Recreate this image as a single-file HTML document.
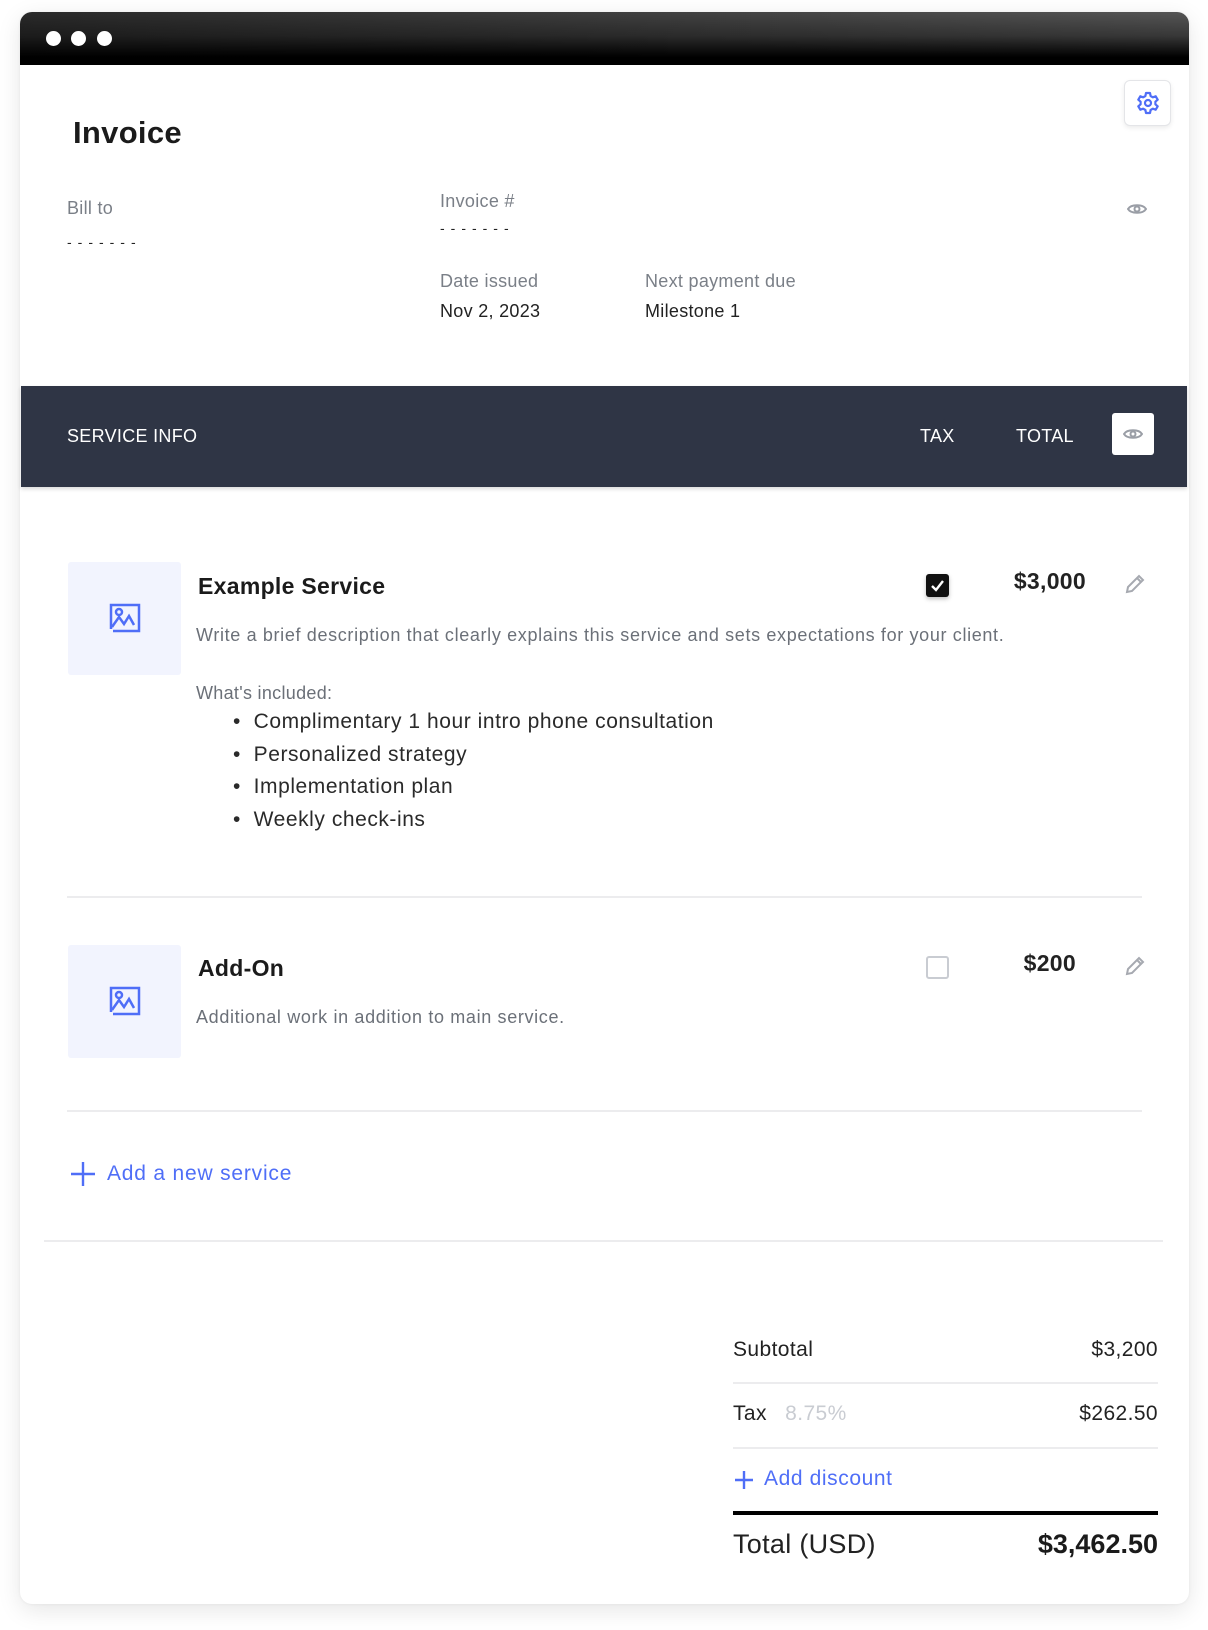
<!DOCTYPE html>
<html><head><meta charset="utf-8"><style>
*{margin:0;padding:0;box-sizing:border-box}
body{width:1208px;height:1630px;background:#fff;font-family:"Liberation Sans",Arial,sans-serif;position:relative;overflow:hidden;color:#1e1e1e}
.a{position:absolute;white-space:nowrap}
.card{position:absolute;left:20px;top:12px;width:1169px;height:1592px;background:#fff;border-radius:12px;box-shadow:0 6px 24px rgba(0,0,0,.10),0 0 3px rgba(0,0,0,.06);overflow:hidden}
.bar{position:absolute;left:0;top:0;width:100%;height:53px;background:linear-gradient(180deg,rgba(0,0,0,0) 0%,rgba(0,0,0,.35) 45%,#000 85%),linear-gradient(90deg,#2a2a2a 0%,#3a3a3a 40%,#555 100%);}
.dot{position:absolute;top:19px;width:15px;height:15px;border-radius:50%;background:#fff}
.lbl{font-size:18px;color:#7a7f87;letter-spacing:.3px}
.val{font-size:18px;color:#222;letter-spacing:.3px}
.gray{color:#6b7078;letter-spacing:.65px}
.line{position:absolute;height:2px;background:#ececee}
.img{position:absolute;width:113px;height:113px;background:#f2f4fe;border-radius:3px}
.img svg{position:absolute;left:41px;top:41px}
.dash{font-size:14px;letter-spacing:6px;color:#222}
</style></head><body>
<div class="card">
 <div class="bar"></div>
 <div class="dot" style="left:26px"></div><div class="dot" style="left:51px"></div><div class="dot" style="left:77px"></div>
</div>
<div class="a" style="left:1124px;top:80px;width:47px;height:46px;border:1px solid #e4e5e8;border-radius:6px;background:#fff;box-shadow:0 2px 5px rgba(0,0,0,.08)">
 <svg width="24" height="24" viewBox="0 0 24 24" style="position:absolute;left:11px;top:10px" fill="none" stroke="#4f6ef7" stroke-width="2.2" stroke-linejoin="round"><path d="M10 2h4l.6 3 2.2 1.3 2.9-1 2 3.4-2.3 2v2.6l2.3 2-2 3.4-2.9-1L14.6 19 14 22h-4l-.6-3-2.2-1.3-2.9 1-2-3.4 2.3-2v-2.6l-2.3-2 2-3.4 2.9 1L9.4 5z"/><circle cx="12" cy="12" r="3"/></svg>
</div>
<div class="a" style="left:73px;top:115px;font-size:31px;font-weight:bold;line-height:36px;color:#1b1b1b;letter-spacing:.3px">Invoice</div>
<div class="a lbl" style="left:67px;top:198px">Bill to</div>
<div class="a dash" style="left:67px;top:234px">-------</div>
<div class="a lbl" style="left:440px;top:191px">Invoice #</div>
<div class="a dash" style="left:440px;top:220px">-------</div>
<svg class="a" style="left:1127px;top:202px" width="20" height="14" viewBox="0 0 20 14" fill="none" stroke="#9a9ea6" stroke-width="2"><path d="M1 7C4 2 16 2 19 7 16 12 4 12 1 7z"/><circle cx="10" cy="7" r="2.5"/></svg>
<div class="a lbl" style="left:440px;top:271px">Date issued</div>
<div class="a val" style="left:440px;top:301px">Nov 2, 2023</div>
<div class="a lbl" style="left:645px;top:271px">Next payment due</div>
<div class="a val" style="left:645px;top:301px">Milestone 1</div>
<div class="a" style="left:21px;top:386px;width:1166px;height:101px;background:#2f3545;box-shadow:0 2px 4px rgba(0,0,0,.15)"></div>
<div class="a" style="left:67px;top:426px;font-size:18px;color:#fff;letter-spacing:.3px">SERVICE INFO</div>
<div class="a" style="left:920px;top:426px;font-size:18px;color:#fff;letter-spacing:.3px">TAX</div>
<div class="a" style="left:1016px;top:426px;font-size:18px;color:#fff;letter-spacing:.3px">TOTAL</div>
<div class="a" style="left:1112px;top:413px;width:42px;height:42px;background:#fff;border-radius:3px">
 <svg width="20" height="14" viewBox="0 0 20 14" style="position:absolute;left:11px;top:14px" fill="none" stroke="#9a9ea6" stroke-width="2"><path d="M1 7C4 2 16 2 19 7 16 12 4 12 1 7z"/><circle cx="10" cy="7" r="2.5"/></svg>
</div>
<div class="img" style="left:68px;top:562px"><svg width="32" height="30" viewBox="0 0 32 30" fill="none" stroke="#4f6ef7" stroke-width="2.5"><path d="M2 26V2h28v26H4"/><circle cx="10" cy="9" r="3"/><path d="M3 24l7-10 5 7 5-8 5 9"/></svg></div>
<div class="a" style="left:198px;top:573px;font-size:23px;font-weight:bold;color:#1b1b1b;letter-spacing:.3px">Example Service</div>
<div class="a" style="left:926px;top:574px;width:23px;height:23px;background:#111;border-radius:3px;box-shadow:0 2px 4px rgba(0,0,0,.25)"><svg width="23" height="23" viewBox="0 0 23 23" fill="none" stroke="#fff" stroke-width="2.4"><path d="M6 12l4 4 7-9"/></svg></div>
<div class="a" style="left:940px;top:568px;width:146px;text-align:right;font-size:23px;font-weight:bold;color:#222;letter-spacing:.3px">$3,000</div>
<svg class="a" style="left:1124px;top:573px" width="22" height="22" viewBox="0 0 22 22" fill="none" stroke="#a6a9b0" stroke-width="2"><path d="M3 19l1-5L15 3l4 4L8 18z M13 5l4 4"/></svg>
<div class="a gray" style="left:196px;top:625px;font-size:18px">Write a brief description that clearly explains this service and sets expectations for your client.</div>
<div class="a gray" style="left:196px;top:683px;font-size:18px;letter-spacing:.3px">What's included:</div>
<div class="a" style="left:233px;top:706px;font-size:21px;line-height:32.6px;color:#2a2a2a;letter-spacing:.55px">
•&nbsp;&nbsp;Complimentary 1 hour intro phone consultation<br>•&nbsp;&nbsp;Personalized strategy<br>•&nbsp;&nbsp;Implementation plan<br>•&nbsp;&nbsp;Weekly check-ins</div>
<div class="line" style="left:67px;top:896px;width:1075px"></div>
<div class="img" style="left:68px;top:945px"><svg width="32" height="30" viewBox="0 0 32 30" fill="none" stroke="#4f6ef7" stroke-width="2.5"><path d="M2 26V2h28v26H4"/><circle cx="10" cy="9" r="3"/><path d="M3 24l7-10 5 7 5-8 5 9"/></svg></div>
<div class="a" style="left:198px;top:955px;font-size:23px;font-weight:bold;color:#1b1b1b;letter-spacing:.3px">Add-On</div>
<div class="a" style="left:926px;top:956px;width:23px;height:23px;border:2px solid #c9ccd2;border-radius:3px;background:#fff"></div>
<div class="a" style="left:940px;top:950px;width:136px;text-align:right;font-size:23px;font-weight:bold;color:#222;letter-spacing:.3px">$200</div>
<svg class="a" style="left:1124px;top:955px" width="22" height="22" viewBox="0 0 22 22" fill="none" stroke="#a6a9b0" stroke-width="2"><path d="M3 19l1-5L15 3l4 4L8 18z M13 5l4 4"/></svg>
<div class="a gray" style="left:196px;top:1007px;font-size:18px">Additional work in addition to main service.</div>
<div class="line" style="left:67px;top:1110px;width:1075px"></div>
<svg class="a" style="left:71px;top:1162px" width="24" height="24" viewBox="0 0 24 24" stroke="#4f6ef7" stroke-width="2.4"><path d="M12 0v24M0 12h24"/></svg>
<div class="a" style="left:107px;top:1162px;font-size:21px;color:#4f6ef7;letter-spacing:.8px">Add a new service</div>
<div class="line" style="left:44px;top:1240px;width:1119px"></div>
<div class="a" style="left:733px;top:1338px;font-size:21px;color:#222;letter-spacing:.4px">Subtotal</div>
<div class="a" style="left:958px;top:1338px;width:200px;text-align:right;font-size:21px;color:#222;letter-spacing:.4px">$3,200</div>
<div class="line" style="left:733px;top:1382px;width:425px"></div>
<div class="a" style="left:733px;top:1402px;font-size:21px;color:#222;letter-spacing:.4px">Tax <span style="color:#c9ccd2;margin-left:12px">8.75%</span></div>
<div class="a" style="left:958px;top:1402px;width:200px;text-align:right;font-size:21px;color:#222;letter-spacing:.4px">$262.50</div>
<div class="line" style="left:733px;top:1447px;width:425px"></div>
<svg class="a" style="left:735px;top:1471px" width="18" height="18" viewBox="0 0 18 18" stroke="#4f6ef7" stroke-width="2.4"><path d="M9 0v18M0 9h18"/></svg>
<div class="a" style="left:764px;top:1467px;font-size:21px;color:#4f6ef7;letter-spacing:.6px">Add discount</div>
<div class="a" style="left:733px;top:1511px;width:425px;height:4px;background:#000"></div>
<div class="a" style="left:733px;top:1529px;font-size:27px;color:#222;letter-spacing:.3px">Total (USD)</div>
<div class="a" style="left:900px;top:1529px;width:258px;text-align:right;font-size:27px;font-weight:bold;color:#1b1b1b">$3,462.50</div>
</body></html>
